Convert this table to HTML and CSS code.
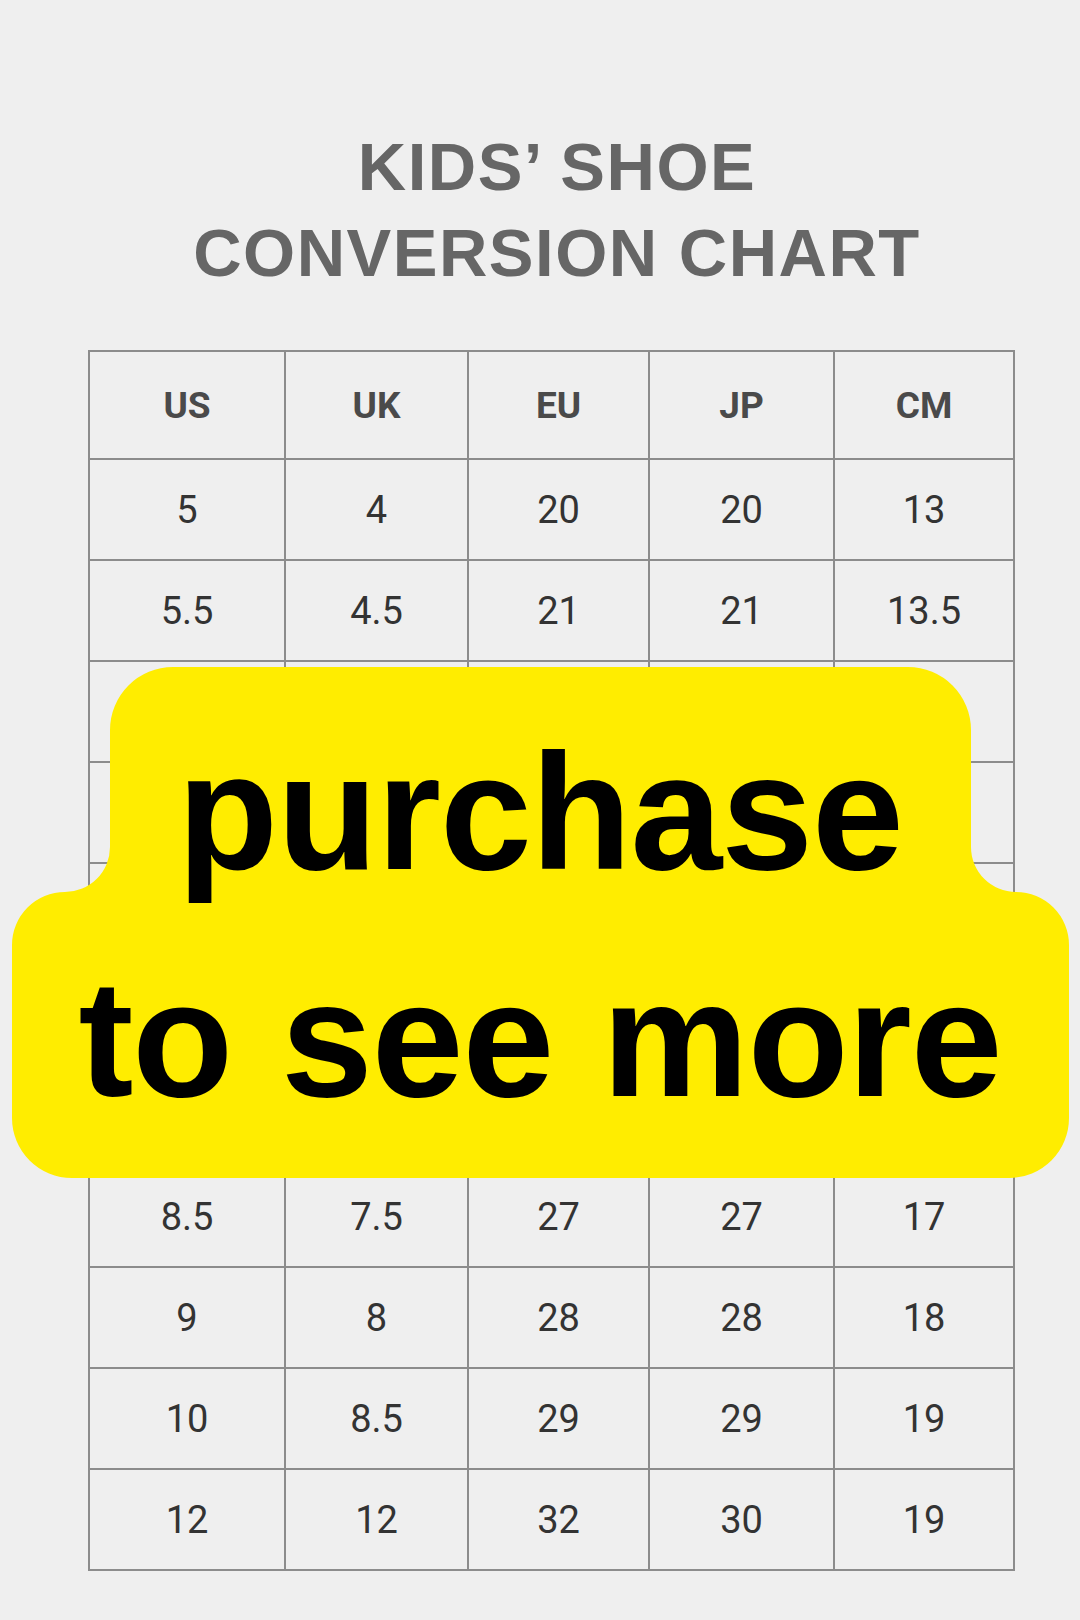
FILE: index.html
```html
<!DOCTYPE html>
<html lang="en">
<head>
<meta charset="utf-8">
<title>Kids' Shoe Conversion Chart</title>
<link rel="stylesheet" href="styles.css">
</head>
<body>
<div class="page">
  <h1 class="title">KIDS’ SHOE<br>CONVERSION CHART</h1>
  <table class="chart">
    <colgroup>
      <col class="c1"><col class="c2"><col class="c3"><col class="c4"><col class="c5">
    </colgroup>
    <thead>
      <tr><th>US</th><th>UK</th><th>EU</th><th>JP</th><th>CM</th></tr>
    </thead>
    <tbody>
      <tr><td>5</td><td>4</td><td>20</td><td>20</td><td>13</td></tr>
      <tr><td>5.5</td><td>4.5</td><td>21</td><td>21</td><td>13.5</td></tr>
      <tr><td>6</td><td>5</td><td>22</td><td>22</td><td>14</td></tr>
      <tr><td>6.5</td><td>5.5</td><td>23</td><td>23</td><td>14.5</td></tr>
      <tr><td>7</td><td>6</td><td>24</td><td>24</td><td>15</td></tr>
      <tr><td>7.5</td><td>6.5</td><td>25</td><td>25</td><td>15.5</td></tr>
      <tr><td>8</td><td>7</td><td>26</td><td>26</td><td>16</td></tr>
      <tr><td>8.5</td><td>7.5</td><td>27</td><td>27</td><td>17</td></tr>
      <tr><td>9</td><td>8</td><td>28</td><td>28</td><td>18</td></tr>
      <tr><td>10</td><td>8.5</td><td>29</td><td>29</td><td>19</td></tr>
      <tr><td>12</td><td>12</td><td>32</td><td>30</td><td>19</td></tr>
    </tbody>
  </table>
  <div class="lock">
    <svg class="lock-shape" width="1080" height="511" viewBox="0 0 1080 511" aria-hidden="true">
      <path d="M173 0 H908 A63 63 0 0 1 971 63 V180 A45 45 0 0 0 1016 225 A53 53 0 0 1 1069 278 V451 A60 60 0 0 1 1009 511 H72 A60 60 0 0 1 12 451 V278 A53 53 0 0 1 65 225 A45 45 0 0 0 110 180 V63 A63 63 0 0 1 173 0 Z" fill="#ffed00"/>
    </svg>
    <p class="lock-text">purchase<br>to see more</p>
  </div>
</div>
</body>
</html>
```

FILE: styles.css
```css
html, body {
  margin: 0;
  padding: 0;
  background: #efefef;
}

.page {
  position: relative;
  width: 1080px;
  height: 1620px;
  overflow: hidden;
  background: #efefef;
}

.title {
  margin: 124px 0 0;
  padding-left: 34px;
  font-family: "Liberation Sans", Arial, sans-serif;
  font-weight: 700;
  font-size: 67px;
  line-height: 86px;
  letter-spacing: 1.5px;
  color: #666666;
  text-align: center;
}

.chart {
  margin: 54px 0 0 88px;
  width: 925px;
  border-collapse: collapse;
  table-layout: fixed;
  font-family: Roboto, "Liberation Sans", sans-serif;
  text-align: center;
}

.c1 { width: 196px; }
.c2 { width: 183px; }
.c3 { width: 181px; }
.c4 { width: 185px; }
.c5 { width: 180px; }

.chart th,
.chart td {
  border: 2px solid #8c8c8c;
  padding: 0;
  vertical-align: middle;
}

.chart th {
  height: 106px;
  font-size: 37px;
  font-weight: 700;
  color: #4a4a4a;
}

.chart td {
  height: 99px;
  font-size: 38px;
  font-weight: 400;
  color: #333333;
}

.lock {
  position: absolute;
  left: 0;
  top: 667px;
  width: 1080px;
  height: 511px;
}

.lock-shape {
  position: absolute;
  left: 0;
  top: 0;
  display: block;
}

.lock-text {
  position: relative;
  margin: 0;
  padding-top: 32px;
  font-family: "Liberation Sans", Arial, sans-serif;
  font-weight: 700;
  font-size: 165px;
  line-height: 227px;
  letter-spacing: -1px;
  word-spacing: 4px;
  color: #000000;
  text-align: center;
}
```
